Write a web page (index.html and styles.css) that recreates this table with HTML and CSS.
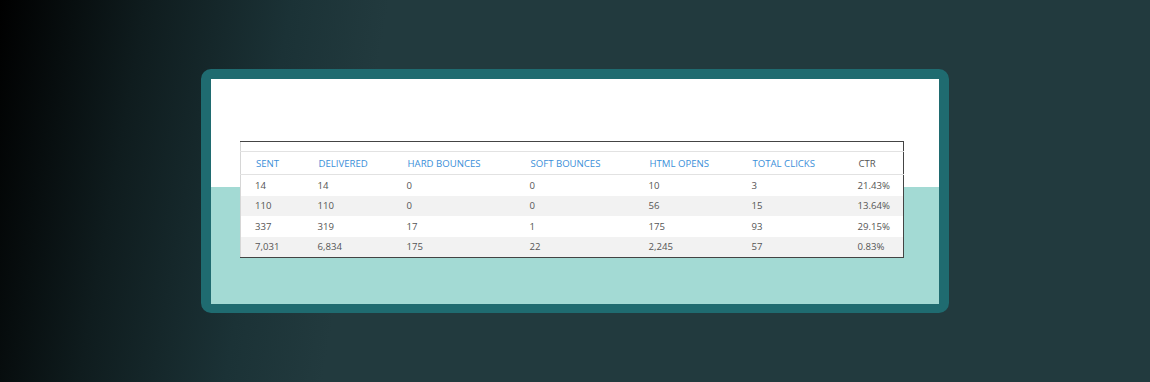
FILE: index.html
```html
<!DOCTYPE html>
<html>
<head>
<meta charset="utf-8">
<link rel="stylesheet" href="styles.css">
</head>
<body>
<div class="frame">
  <div class="panel">
    <table class="stats">
      <colgroup>
        <col class="c1"><col class="c2"><col class="c3"><col class="c4"><col class="c5"><col class="c6"><col class="c7">
      </colgroup>
      <tr class="spacer"><td colspan="7"></td></tr>
      <tr class="head">
        <th>SENT</th><th>DELIVERED</th><th>HARD BOUNCES</th><th>SOFT BOUNCES</th><th>HTML OPENS</th><th>TOTAL CLICKS</th><th class="plain">CTR</th>
      </tr>
      <tr><td>14</td><td>14</td><td>0</td><td>0</td><td>10</td><td>3</td><td>21.43%</td></tr>
      <tr class="alt"><td>110</td><td>110</td><td>0</td><td>0</td><td>56</td><td>15</td><td>13.64%</td></tr>
      <tr><td>337</td><td>319</td><td>17</td><td>1</td><td>175</td><td>93</td><td>29.15%</td></tr>
      <tr class="alt"><td>7,031</td><td>6,834</td><td>175</td><td>22</td><td>2,245</td><td>57</td><td>0.83%</td></tr>
    </table>
  </div>
</div>
</body>
</html>
```
FILE: styles.css
```css
html, body {
  margin: 0;
  height: 100%;
}
body {
  width: 1150px;
  height: 382px;
  box-sizing: border-box;
  padding: 69px 0 0 201px;
  background: linear-gradient(100deg, #000 0%, #0f1c1e 12%, #1b3236 24%, #223a3e 32%, #223a3e 100%);
  font-family: "Open Sans", "Noto Sans", sans-serif;
  overflow: hidden;
}
.frame {
  width: 748px;
  height: 244px;
  box-sizing: border-box;
  border: 10px solid #1f6b70;
  border-bottom-width: 9px;
  border-radius: 10px;
  overflow: hidden;
}
.panel {
  height: 100%;
  box-sizing: border-box;
  padding: 62px 0 0 29px;
  background: linear-gradient(#ffffff 0, #ffffff 108px, #a3dad4 108px);
}
.stats {
  width: 663px;
  border-collapse: collapse;
  table-layout: fixed;
  background: #fff;
  border-top: 1px solid #444;
  border-bottom: 1px solid #444;
  border-left: 1px solid #d6d6d6;
  border-right: 1px solid #444;
  font-size: 9.6px;
  color: #555;
}
.c1 { width: 63px; }
.c2 { width: 89px; }
.c3 { width: 123px; }
.c4 { width: 119px; }
.c5 { width: 103px; }
.c6 { width: 106px; }
.c7 { width: 60px; }
.stats td, .stats th {
  padding: 0 0 0 14px;
  text-align: left;
  white-space: nowrap;
}
.stats tr.spacer td {
  height: 9px;
  padding: 0;
  font-size: 0;
  line-height: 0;
  border-bottom: 1px solid #e2e2e2;
}
.head th {
  height: 22px;
  font-weight: normal;
  color: #3b8fd9;
  padding-left: 15px;
  border-bottom: 1px solid #e2e2e2;
}
.head th.plain {
  color: #555;
}
.stats tr td {
  height: 20.5px;
}
.stats tr.alt {
  background: #f2f2f2;
}
```
